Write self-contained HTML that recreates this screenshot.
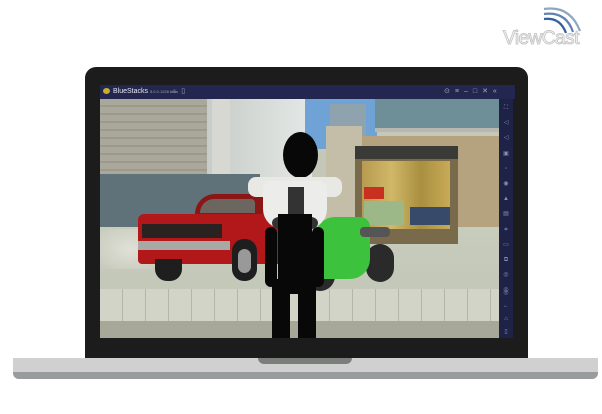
<!DOCTYPE html>
<html><head><meta charset="utf-8"><style>
*{margin:0;padding:0;box-sizing:border-box}
body{width:602px;height:414px;background:#fff;position:relative;overflow:hidden;font-family:"Liberation Sans",sans-serif}
.a{position:absolute}
</style></head><body>
<svg class="a" style="left:540px;top:3px" width="60" height="32" viewBox="0 0 60 32">
<path d="M4 6 Q30 2 40 28" stroke="#8fa6c2" stroke-width="2.2" fill="none"/>
<path d="M4 11 Q26 8 33 29" stroke="#5f82b0" stroke-width="2.2" fill="none"/>
<path d="M4 16 Q20 14 26 30" stroke="#2f5f9c" stroke-width="2.2" fill="none"/>
</svg>
<div class="a" style="left:503px;top:28px;font-size:19px;color:#fff;-webkit-text-stroke:1px #c8c8c8;letter-spacing:-0.5px">ViewCast</div>

<div class="a" style="left:85px;top:67px;width:443px;height:292px;background:#1c1c1c;border-radius:11px 11px 0 0"></div>
<div class="a" style="left:100px;top:85px;width:415px;height:14px;background:#23264e"></div>
<div class="a" style="left:103px;top:88px;width:7px;height:6px;background:#c8b02a;border-radius:50%"></div>
<div class="a" style="left:113px;top:86px;font-size:7px;color:#e8e8f0;line-height:12px">BlueStacks <span style="font-size:4px;color:#9aa">5.0.0.1228 beta</span></div>
<div class="a" style="left:172px;top:87px;font-size:7px;color:#aab;line-height:10px;letter-spacing:5px">⌂▯</div>
<div class="a" style="left:444px;top:86px;font-size:7px;color:#aab;line-height:12px;letter-spacing:5px">⊙≡–□✕«</div>
<div class="a" style="left:499px;top:99px;width:14px;height:239px;background:#1f2247"></div>
<div class="a" style="left:502px;top:101px;width:8px;font-size:6px;line-height:15.2px;color:#8890b8;text-align:center">⛶<br>◁<br>◁<br>▣<br>▫<br>◉<br>▲<br>▤<br>⌗<br>▭<br>⧉<br>◎<br>◎</div>
<div class="a" style="left:502px;top:287px;width:8px;font-size:6px;line-height:13px;color:#8890b8;text-align:center">◎<br>←<br>⌂<br>▯</div>

<div class="a" style="left:100px;top:99px;width:399px;height:239px;overflow:hidden;background:#c4c8b8">
 <div class="a" style="left:0;top:0;width:110px;height:80px;background:repeating-linear-gradient(#aaa89a 0 6px,#9c9a8c 6px 8px)"></div>
 <div class="a" style="left:107px;top:0;width:105px;height:82px;background:linear-gradient(90deg,#c8ccc8,#e4e8e6)"></div>
 <div class="a" style="left:112px;top:0;width:18px;height:80px;background:#d8d8d2"></div>
 <div class="a" style="left:205px;top:0;width:72px;height:50px;background:#6fa3d6"></div>
 <div class="a" style="left:230px;top:5px;width:36px;height:40px;background:#8ea3ad"></div>
 <div class="a" style="left:226px;top:27px;width:36px;height:100px;background:#c4bea8"></div>
 <div class="a" style="left:275px;top:0;width:124px;height:33px;background:#6e8e98;border-bottom:4px solid #b8b8b0"></div>
 <div class="a" style="left:262px;top:37px;width:137px;height:93px;background:#b5a27f"></div>
 <div class="a" style="left:0;top:75px;width:160px;height:75px;background:#5f7279"></div>
 <div class="a" style="left:0;top:128px;width:399px;height:111px;background:linear-gradient(#c8ccbc,#c0c4b4)"></div>
 <div class="a" style="left:0;top:190px;width:399px;height:35px;background:repeating-linear-gradient(90deg,#d2d4c8 0 22px,#b4b6a8 22px 23px)"></div>
 <div class="a" style="left:0;top:222px;width:399px;height:17px;background:#a8a898"></div>
 <div class="a" style="left:0;top:130px;width:60px;height:40px;background:radial-gradient(#e0e0d8,rgba(224,224,216,0))"></div>
 <div class="a" style="left:255px;top:47px;width:103px;height:14px;background:#3a3a36"></div>
 <div class="a" style="left:255px;top:60px;width:103px;height:85px;background:#7a6a4c"></div>
 <div class="a" style="left:262px;top:62px;width:88px;height:68px;background:linear-gradient(90deg,#b89a50,#d0b868,#a89040,#c8aa58)"></div>
 <div class="a" style="left:264px;top:88px;width:20px;height:12px;background:#c83020"></div>
 <div class="a" style="left:264px;top:102px;width:40px;height:24px;background:#9cb888"></div>
 <div class="a" style="left:310px;top:108px;width:40px;height:18px;background:#384a6a"></div>
 <div class="a" style="left:95px;top:95px;width:70px;height:25px;background:#8a1616;border-radius:20px 8px 0 0"></div>
 <div class="a" style="left:100px;top:100px;width:55px;height:14px;background:#6c6660;border-radius:14px 4px 0 0"></div>
 <div class="a" style="left:38px;top:115px;width:148px;height:50px;background:#b2181a;border-radius:6px 10px 4px 4px"></div>
 <div class="a" style="left:38px;top:142px;width:92px;height:9px;background:#a8a8a4"></div>
 <div class="a" style="left:42px;top:125px;width:80px;height:14px;background:#2a2220"></div>
 <div class="a" style="left:55px;top:160px;width:27px;height:22px;background:#1e1e1e;border-radius:0 0 12px 12px"></div>
 <div class="a" style="left:132px;top:140px;width:25px;height:42px;background:#1e1e1e;border-radius:12px"></div>
 <div class="a" style="left:138px;top:150px;width:13px;height:24px;background:#999;border-radius:7px"></div>
 <div class="a" style="left:205px;top:150px;width:30px;height:42px;background:#2a2a2a;border-radius:15px"></div>
 <div class="a" style="left:266px;top:145px;width:28px;height:38px;background:#2a2a2a;border-radius:14px"></div>
 <div class="a" style="left:215px;top:118px;width:55px;height:62px;background:#3cc23c;border-radius:20px 10px 20px 8px"></div>
 <div class="a" style="left:260px;top:128px;width:30px;height:10px;background:#555;border-radius:4px"></div>
 <div class="a" style="left:183px;top:33px;width:35px;height:46px;background:#080808;border-radius:50%"></div>
 <div class="a" style="left:148px;top:78px;width:94px;height:20px;background:#e8e8e4;border-radius:8px"></div>
 <div class="a" style="left:163px;top:82px;width:64px;height:48px;background:#ececea;border-radius:8px 8px 20px 20px"></div>
 <div class="a" style="left:188px;top:88px;width:16px;height:28px;background:#333"></div>
 <div class="a" style="left:172px;top:118px;width:14px;height:12px;background:#333;border-radius:50%"></div>
 <div class="a" style="left:204px;top:118px;width:14px;height:12px;background:#333;border-radius:50%"></div>
 <div class="a" style="left:165px;top:128px;width:12px;height:60px;background:#080808;border-radius:6px"></div>
 <div class="a" style="left:212px;top:128px;width:12px;height:60px;background:#080808;border-radius:6px"></div>
 <div class="a" style="left:178px;top:115px;width:34px;height:80px;background:#080808"></div>
 <div class="a" style="left:172px;top:180px;width:18px;height:60px;background:#080808"></div>
 <div class="a" style="left:198px;top:180px;width:18px;height:60px;background:#080808"></div>
</div>

<div class="a" style="left:13px;top:358px;width:585px;height:21px;background:#d0d0d0;border-radius:0 0 6px 6px;overflow:hidden">
 <div class="a" style="left:0;top:14px;width:585px;height:7px;background:#999c9c"></div>
</div>
<div class="a" style="left:258px;top:358px;width:94px;height:6px;background:#7c7e7c;border-radius:0 0 6px 6px"></div>
</body></html>
